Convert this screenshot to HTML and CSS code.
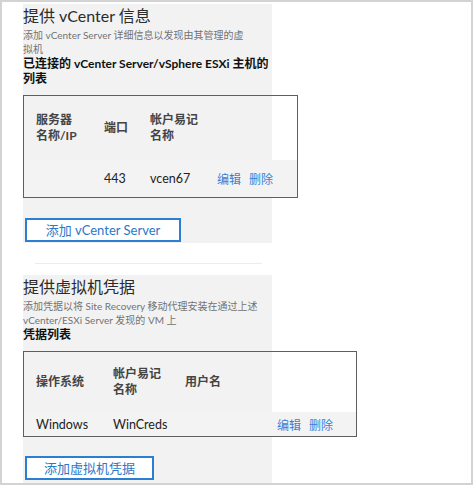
FILE: index.html
```html
<!DOCTYPE html>
<html lang="zh-CN">
<head>
<meta charset="utf-8">
<title>提供 vCenter 信息</title>
<link rel="stylesheet" href="styles.css">
</head>
<body>
<div class="frame">
  <section class="panel">
    <h1 class="title">提供 vCenter 信息</h1>
    <p class="desc">添加 vCenter Server 详细信息以发现由其管理的虚<br>拟机</p>
    <h2 class="subhead">已连接的 vCenter Server/vSphere ESXi 主机的<br>列表</h2>
    <div class="grid grid-vc">
      <div class="cell head">服务器<br>名称/IP</div>
      <div class="cell head">端口</div>
      <div class="cell head">帐户易记<br>名称</div>
      <div class="cell head"></div>
      <div class="cell data"></div>
      <div class="cell data">443</div>
      <div class="cell data">vcen67</div>
      <div class="cell data links"><a class="link">编辑</a><a class="link">删除</a></div>
    </div>
    <button class="btn btn-vc">添加 vCenter Server</button>
  </section>
  <div class="sep"></div>
  <section class="panel panel-fill">
    <h1 class="title">提供虚拟机凭据</h1>
    <p class="desc">添加凭据以将 Site Recovery 移动代理安装在通过上述<br>vCenter/ESXi Server 发现的 VM 上</p>
    <h2 class="subhead">凭据列表</h2>
    <div class="grid grid-cred">
      <div class="cell head">操作系统</div>
      <div class="cell head">帐户易记<br>名称</div>
      <div class="cell head">用户名</div>
      <div class="cell head"></div>
      <div class="cell data">Windows</div>
      <div class="cell data">WinCreds</div>
      <div class="cell data"></div>
      <div class="cell data links"><a class="link">编辑</a><a class="link">删除</a></div>
    </div>
    <button class="btn btn-cred">添加虚拟机凭据</button>
  </section>
</div>
</body>
</html>
```
FILE: styles.css
```css
* { box-sizing: border-box; }
html, body { margin: 0; padding: 0; background: #fff; }
body {
  font-family: Lato, "Noto Sans CJK SC", sans-serif;
  color: #222;
}
.frame {
  width: 473px;
  height: 485px;
  border: 2px solid #d3d3d3;
  padding: 2px 0 0 21px;
  display: flex;
  flex-direction: column;
}
.panel {
  width: 249px;
  background: #f2f2f2;
  padding: 2px 0 1px 0;
  flex: none;
}
.panel-fill { flex: 1; }
.title {
  margin: 0;
  font-size: 16px;
  line-height: 20px;
  font-weight: 400;
  color: #2b2b2b;
  white-space: nowrap;
}
.desc {
  margin: 2px 0 0 0;
  font-size: 10px;
  line-height: 14px;
  color: #737373;
  white-space: nowrap;
}
.subhead {
  margin: 0;
  font-size: 12px;
  line-height: 15px;
  font-weight: 700;
  color: #111;
  white-space: nowrap;
}
.grid {
  display: grid;
  margin-top: 9px;
  border: 1px solid #5f5f5f;
}
.grid-vc {
  width: 275px;
  grid-template-columns: 68px 46px 68px 1fr;
  grid-template-rows: 64px 37px;
}
.grid-cred {
  width: 334px;
  grid-template-columns: 77px 72px 93px 1fr;
  grid-template-rows: 60px 24px;
}
.cell {
  display: flex;
  align-items: center;
  padding-left: 12px;
  font-size: 12px;
  white-space: nowrap;
}
.head {
  line-height: 16px;
  font-weight: 700;
  color: #444;
}
.data {
  background: #f3f3f3;
  color: #222;
  font-size: 12.5px;
}
.links { gap: 8px; padding-left: 11px; }
.link {
  color: #3a7fd8;
  font-size: 12px;
  cursor: pointer;
}
.btn {
  display: block;
  height: 24px;
  padding: 0;
  border: 2px solid #2b7fd2;
  background: #fff;
  color: #2a78c8;
  font-family: inherit;
  font-size: 13px;
  line-height: 18px;
  text-align: center;
  margin-left: 2px;
}
.btn-vc { width: 156px; margin-top: 20px; }
.btn-cred { width: 129px; margin-top: 19px; }
.sep {
  flex: none;
  width: 227px;
  height: 1px;
  margin: 20px 0 11px 12px;
  background: #ececec;
}
```
